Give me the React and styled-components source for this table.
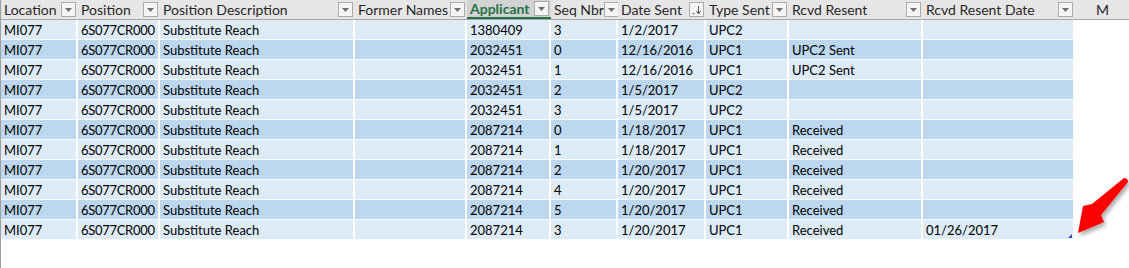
import React from "react";
import styled, { createGlobalStyle } from "styled-components";

const GlobalStyle = createGlobalStyle`
  html, body {
    margin: 0;
    padding: 0;
    background: #ffffff;
  }
  body {
    font-family: Lato, "Liberation Sans", sans-serif;
    font-size: 13px;
    color: #000000;
  }
`;

const COLS = "77px 82px 195px 112px 84px 67px 88px 83px 134px 152px 1fr";

const Sheet = styled.div`
  position: relative;
  width: 1129px;
  height: 268px;
  border-left: 1px solid #9d9d9d;
  box-sizing: border-box;
  overflow: hidden;
`;

const HeaderRow = styled.div`
  display: grid;
  grid-template-columns: ${COLS};
  height: 20px;
  background: #e6e6e6;
  border-bottom: 1px solid #a6a6a6;
  box-sizing: border-box;
`;

const HeadCell = styled.div`
  display: flex;
  align-items: center;
  justify-content: ${(p) => (p.$center ? "center" : "space-between")};
  padding: 0 2px 0 3px;
  height: 19px;
  box-sizing: border-box;
  font-size: 14px;
  background: ${(p) => (p.$active ? "#d2d2d2" : "#e6e6e6")};
  color: ${(p) => (p.$active ? "#217346" : "#262626")};
  font-weight: ${(p) => (p.$active ? 700 : 400)};
  border-bottom: ${(p) => (p.$active ? "2px solid #217346" : "none")};
  white-space: nowrap;
  overflow: hidden;
`;

const FilterBtn = styled.span`
  display: flex;
  align-items: center;
  justify-content: center;
  flex: none;
  width: 15px;
  height: 15px;
  box-sizing: border-box;
  border: 1px solid #ababab;
  background: #f4f4f4;
`;

const Row = styled.div`
  display: grid;
  grid-template-columns: ${COLS};
  height: 20px;
`;

const Cell = styled.div`
  position: relative;
  display: flex;
  align-items: center;
  padding-left: 3px;
  box-sizing: border-box;
  letter-spacing: ${(p) => (p.$tight ? "-0.3px" : "0")};
  background: ${(p) => (p.$empty ? "transparent" : p.$dark ? "#bdd7ee" : "#ddebf7")};
  border-right: ${(p) => (p.$empty ? "none" : "2px solid #ffffff")};
  border-bottom: 1px solid #ffffff;
  white-space: nowrap;
  overflow: hidden;
`;

const ResizeHandle = styled.span`
  position: absolute;
  right: 1px;
  bottom: 1px;
  width: 0;
  height: 0;
  border-left: 4px solid transparent;
  border-bottom: 4px solid #3f51b5;
`;

const Arrow = styled.svg`
  position: absolute;
  left: 1070px;
  top: 172px;
  overflow: visible;
`;

function DropIcon() {
  return (
    <svg width="7" height="4" viewBox="0 0 7 4">
      <path d="M0 0 L7 0 L3.5 4 Z" fill="#6f6f6f" />
    </svg>
  );
}

function SortIcon() {
  return (
    <svg width="11" height="10" viewBox="0 0 11 10">
      <path d="M1 8 L4 8 L2.5 9.5 Z" fill="#6f6f6f" />
      <path d="M7.5 1 V8" stroke="#555" strokeWidth="1" />
      <path d="M5.5 6 L7.5 9 L9.5 6" stroke="#555" strokeWidth="1" fill="none" />
    </svg>
  );
}

const headers = [
  "Location",
  "Position",
  "Position Description",
  "Former Names",
  "Applicant",
  "Seq Nbr",
  "Date Sent",
  "Type Sent",
  "Rcvd Resent",
  "Rcvd Resent Date",
];

const rows = [
  ["1380409", "3", "1/2/2017", "UPC2", "", ""],
  ["2032451", "0", "12/16/2016", "UPC1", "UPC2 Sent", ""],
  ["2032451", "1", "12/16/2016", "UPC1", "UPC2 Sent", ""],
  ["2032451", "2", "1/5/2017", "UPC2", "", ""],
  ["2032451", "3", "1/5/2017", "UPC2", "", ""],
  ["2087214", "0", "1/18/2017", "UPC1", "Received", ""],
  ["2087214", "1", "1/18/2017", "UPC1", "Received", ""],
  ["2087214", "2", "1/20/2017", "UPC1", "Received", ""],
  ["2087214", "4", "1/20/2017", "UPC1", "Received", ""],
  ["2087214", "5", "1/20/2017", "UPC1", "Received", ""],
  ["2087214", "3", "1/20/2017", "UPC1", "Received", "01/26/2017"],
];

export default function App() {
  return (
    <>
      <GlobalStyle />
      <Sheet>
        <HeaderRow>
          {headers.map((h) => (
            <HeadCell key={h} $active={h === "Applicant"}>
              <span>{h}</span>
              <FilterBtn>{h === "Date Sent" ? <SortIcon /> : <DropIcon />}</FilterBtn>
            </HeadCell>
          ))}
          <HeadCell $center>M</HeadCell>
        </HeaderRow>
        {rows.map((r, i) => {
          const cells = ["MI077", "6S077CR000", "Substitute Reach", "", ...r];
          const last = i === rows.length - 1;
          return (
            <Row key={i}>
              {cells.map((c, j) => (
                <Cell key={j} $dark={i % 2 === 1} $tight={j === 1}>
                  {c}
                  {last && j === cells.length - 1 && <ResizeHandle />}
                </Cell>
              ))}
              <Cell $empty />
            </Row>
          );
        })}
        <Arrow width="60" height="70" viewBox="0 0 60 70">
          <defs>
            <filter id="sh" x="-30%" y="-30%" width="160%" height="160%">
              <feDropShadow dx="2" dy="3" stdDeviation="2" floodColor="#000" floodOpacity="0.35" />
            </filter>
          </defs>
          <path
            d="M53 6 Q57 6 57 10 L30 43 L33 50 L7 61 L12 34 L21 32 Z"
            fill="#ff0000"
            filter="url(#sh)"
          />
        </Arrow>
      </Sheet>
    </>
  );
}
